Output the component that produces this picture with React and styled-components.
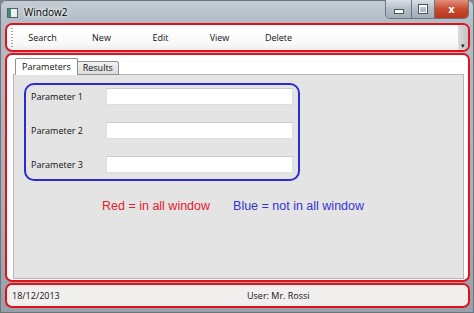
import React from 'react'
import styled, { createGlobalStyle } from 'styled-components'

const Global = createGlobalStyle`
    html, body {
        margin: 0;
        padding: 0;
        background: #7d858d;
    }
    body {
        font-family: "Open Sans", "Noto Sans", sans-serif;
    }
`

const Frame = styled.div`
    width: 474px;
    height: 313px;
    box-sizing: border-box;
    display: flex;
    flex-direction: column;
    padding: 0 4px 5px 5px;
    border-radius: 6px 6px 0 0;
    background: linear-gradient(180deg, #c4ccd4 0%, #b2bbc4 8%, #a9b2bb 60%, #98a1aa 100%);
    box-shadow: inset 0 0 0 1px #6c747c;
`

const TitleBar = styled.div`
    height: 23px;
    display: flex;
    align-items: flex-start;
    position: relative;
`

const AppIcon = styled.div`
    width: 9px;
    height: 8px;
    margin: 8px 6px 0 2px;
    background: linear-gradient(90deg, #3f8f6a 0 35%, #e8f0f4 35% 100%);
    border: 1px solid #55606a;
`

const Title = styled.span`
    margin-top: 5px;
    font-size: 10px;
    color: #000;
    text-shadow: 0 0 6px #fff, 0 0 3px #fff;
`

const Caption = styled.div`
    position: absolute;
    right: 1px;
    top: 0;
    display: flex;
    height: 18px;
    border: 1px solid #6b7580;
    border-top: none;
    border-radius: 0 0 5px 5px;
    overflow: hidden;
`

const CapBtn = styled.div`
    width: ${p => p.w}px;
    display: flex;
    align-items: center;
    justify-content: center;
    background: ${p => p.close
        ? 'linear-gradient(180deg, #e0907c 0%, #c94a32 50%, #b8361e 100%)'
        : 'linear-gradient(180deg, #d8dee4 0%, #b4bec8 50%, #a2acb6 100%)'};
    border-left: ${p => p.first ? 'none' : '1px solid #6b7580'};
    color: #fff;
    font-family: "DejaVu Sans", sans-serif;
    font-weight: bold;
    font-size: 10px;
`

const MinGlyph = styled.div`
    width: 8px;
    height: 3px;
    margin-top: 5px;
    background: #fff;
    border: 1px solid #4a525a;
`

const MaxGlyph = styled.div`
    width: 6px;
    height: 5px;
    border: 1px solid #fff;
    border-top-width: 2px;
    outline: 1px solid #4a525a;
`

const RedBox = styled.div`
    border: 2px solid #e0121c;
    border-radius: 7px;
    box-sizing: border-box;
    margin-bottom: 1px;
    overflow: hidden;
`

const ToolBar = styled(RedBox)`
    height: 29px;
    display: flex;
    align-items: center;
    background: linear-gradient(180deg, #ffffff 0%, #fafafa 70%, #eeeeee 100%);
    position: relative;
`

const Grip = styled.div`
    width: 2px;
    height: 19px;
    margin: 0 0 0 4px;
    background: repeating-linear-gradient(180deg, #9aa2aa 0 1px, transparent 1px 3px);
`

const ToolItem = styled.div`
    width: 59px;
    text-align: center;
    font-size: 9px;
    color: #111;
    &:first-of-type { margin-left: 1px; }
`

const Overflow = styled.div`
    margin-left: auto;
    width: 10px;
    align-self: stretch;
    background: linear-gradient(90deg, #dcdcdc, #c2c2c2);
    display: flex;
    align-items: flex-end;
    justify-content: center;
    font-size: 7px;
    color: #222;
    line-height: 9px;
`

const Main = styled(RedBox)`
    flex: 1;
    background: #fff;
    padding: 2px 4px 1px 6px;
    display: flex;
    flex-direction: column;
`

const Tabs = styled.div`
    display: flex;
    align-items: flex-end;
    padding-left: 2px;
    height: 18px;
    position: relative;
    z-index: 1;
`

const Tab = styled.div`
    height: ${p => p.active ? 17 : 14}px;
    box-sizing: border-box;
    padding: 0 ${p => p.active ? 6 : 5}px;
    border: 1px solid #8e8f8f;
    border-bottom: ${p => p.active ? '1px solid #fff' : '1px solid #8e8f8f'};
    margin-left: ${p => p.active ? 0 : -1}px;
    border-radius: 2px 2px 0 0;
    background: ${p => p.active ? '#fff' : 'linear-gradient(180deg, #f2f2f2, #dcdcdc)'};
    font-size: 9px;
    line-height: ${p => p.active ? 15 : 12}px;
    color: #111;
`

const Panel = styled.div`
    flex: 1;
    margin-top: -1px;
    border: 1px solid #b6b6b6;
    background: #e4e4e4;
    padding: 8px 10px;
`

const GroupBox = styled.div`
    width: 276px;
    box-sizing: border-box;
    border: 2px solid #2c2ccc;
    border-radius: 10px;
    padding: 3px 4px 6px 5px;
    display: grid;
    grid-template-columns: 75px 187px;
    grid-auto-rows: 17px;
    row-gap: 17px;
    align-items: center;
`

const Label = styled.span`
    font-size: 9px;
    color: #111;
`

const Field = styled.div`
    height: 17px;
    box-sizing: border-box;
    background: #fff;
    border: 1px solid #dedede;
    border-top-color: #cbcbcb;
`

const Legend = styled.div`
    display: flex;
    gap: 23px;
    margin: 18px 0 0 78px;
    font-family: "Liberation Sans", Arial, sans-serif;
    font-size: 12.5px;
`

const Note = styled.span`
    color: ${p => p.color};
`

const Status = styled(RedBox)`
    height: 25px;
    margin-bottom: 0;
    background: #f1efee;
    display: flex;
    align-items: center;
    padding-left: 5px;
    font-size: 9px;
    color: #111;
`

const StatusItem = styled.span`
    width: ${p => p.w ? p.w + 'px' : 'auto'};
`

export default function App() {
    const params = ['Parameter 1', 'Parameter 2', 'Parameter 3']
    return (
        <>
            <Global />
            <Frame>
                <TitleBar>
                    <AppIcon />
                    <Title>Window2</Title>
                    <Caption>
                        <CapBtn w={25} first><MinGlyph /></CapBtn>
                        <CapBtn w={22}><MaxGlyph /></CapBtn>
                        <CapBtn w={33} close>x</CapBtn>
                    </Caption>
                </TitleBar>
                <ToolBar>
                    <Grip />
                    {['Search', 'New', 'Edit', 'View', 'Delete'].map(t => (
                        <ToolItem key={t}>{t}</ToolItem>
                    ))}
                    <Overflow>▾</Overflow>
                </ToolBar>
                <Main>
                    <Tabs>
                        <Tab active>Parameters</Tab>
                        <Tab>Results</Tab>
                    </Tabs>
                    <Panel>
                        <GroupBox>
                            {params.map(p => (
                                <React.Fragment key={p}>
                                    <Label>{p}</Label>
                                    <Field />
                                </React.Fragment>
                            ))}
                        </GroupBox>
                        <Legend>
                            <Note color="#e4202a">Red = in all window</Note>
                            <Note color="#3434d6">Blue = not in all window</Note>
                        </Legend>
                    </Panel>
                </Main>
                <Status>
                    <StatusItem w={235}>18/12/2013</StatusItem>
                    <StatusItem>User: Mr. Rossi</StatusItem>
                </Status>
            </Frame>
        </>
    )
}
